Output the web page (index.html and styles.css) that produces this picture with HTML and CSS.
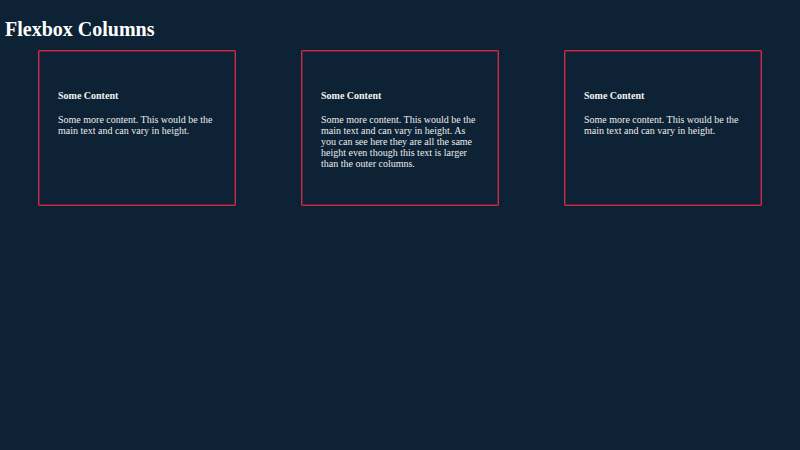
FILE: index.html
```html
<!DOCTYPE html>
<html lang="en">
<head>
<meta charset="utf-8">
<title>Flexbox Columns</title>
<link rel="stylesheet" href="styles.css">
</head>
<body>
<h1 class="title">Flexbox Columns</h1>
<div class="columns">
  <div class="col">
    <h4 class="col-title">Some Content</h4>
    <p class="col-text">Some more content. This would be the main text and can vary in height.</p>
  </div>
  <div class="col">
    <h4 class="col-title">Some Content</h4>
    <p class="col-text">Some more content. This would be the main text and can vary in height. As you can see here they are all the same height even though this text is larger than the outer columns.</p>
  </div>
  <div class="col">
    <h4 class="col-title">Some Content</h4>
    <p class="col-text">Some more content. This would be the main text and can vary in height.</p>
  </div>
</div>
</body>
</html>
```
FILE: styles.css
```css
html {
  background: #0d2234;
}
body {
  margin: 5px;
  background: #0d2234;
  color: #f2f2f2;
  font-family: "Liberation Serif", "Times New Roman", serif;
  font-size: 10px;
}
.title {
  font-size: 20px;
  font-weight: bold;
  margin: 13px 0 9px;
  color: #ffffff;
}
.columns {
  display: flex;
  justify-content: space-between;
  align-items: stretch;
  padding: 0 33px;
}
.col {
  box-sizing: border-box;
  width: 198px;
  border: 1px solid #cc2a48;
  border-radius: 1px;
  box-shadow: inset 0 0 0 1px rgba(204, 42, 72, 0.45);
  padding: 26px 19px;
}
.col-title {
  font-size: 10px;
  font-weight: bold;
  margin: 13px 0;
}
.col-text {
  margin: 10px 0;
  color: #ececec;
}
```
